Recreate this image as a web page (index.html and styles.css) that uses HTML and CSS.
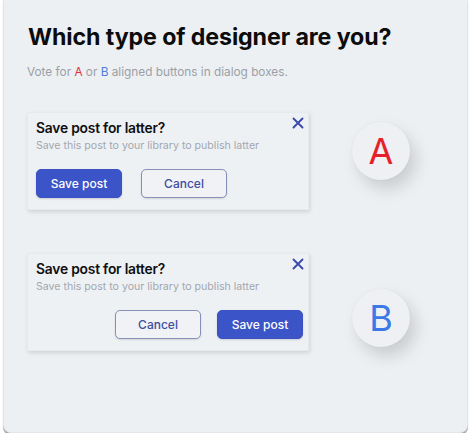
FILE: index.html
```html
<!DOCTYPE html>
<html lang="en">
<head>
<meta charset="utf-8">
<title>Which type of designer are you?</title>
<link rel="stylesheet" href="styles.css">
</head>
<body>
<div class="card">
  <h1 class="title">Which type of designer are you?</h1>
  <p class="lead">Vote for <span class="a">A</span> or <span class="b">B</span> aligned buttons in dialog boxes.</p>

  <div class="row">
    <div class="dialog">
      <div class="dialog-head">
        <h2 class="dialog-title">Save post for latter?</h2>
        <svg class="close" viewBox="0 0 12 12" width="12" height="12"><path d="M1.5 1.5 L10.5 10.5 M10.5 1.5 L1.5 10.5" stroke="#3a49ad" stroke-width="1.9" stroke-linecap="round" fill="none"/></svg>
      </div>
      <p class="dialog-text">Save this post to your library to publish latter</p>
      <div class="actions">
        <button class="btn btn-primary">Save post</button>
        <button class="btn btn-outline">Cancel</button>
      </div>
    </div>
    <div class="badge badge-a">A</div>
  </div>

  <div class="row row-b">
    <div class="dialog">
      <div class="dialog-head">
        <h2 class="dialog-title">Save post for latter?</h2>
        <svg class="close" viewBox="0 0 12 12" width="12" height="12"><path d="M1.5 1.5 L10.5 10.5 M10.5 1.5 L1.5 10.5" stroke="#3a49ad" stroke-width="1.9" stroke-linecap="round" fill="none"/></svg>
      </div>
      <p class="dialog-text">Save this post to your library to publish latter</p>
      <div class="actions actions-end">
        <button class="btn btn-outline">Cancel</button>
        <button class="btn btn-primary">Save post</button>
      </div>
    </div>
    <div class="badge badge-b">B</div>
  </div>
</div>
</body>
</html>
```
FILE: styles.css
```css
* { box-sizing: border-box; }
html, body { margin: 0; padding: 0; background: #ffffff; }
body { font-family: Inter, "Noto Sans", sans-serif; }

.card {
  margin: 0 6px 0 3px;
  width: 465px;
  height: 433px;
  background: #edf0f3;
  border: 1px solid #e2e5e9;
  border-top: none;
  border-radius: 0 0 8px 8px;
  box-shadow: 0 2px 1px rgba(0,0,0,0.38);
  padding: 22px 0 0 23px;
}

.title {
  margin: 0 0 0 1px;
  font-size: 23.2px;
  line-height: 30px;
  font-weight: 700;
  color: #0c0c0d;
  letter-spacing: -0.1px;
}

.lead {
  margin: 12px 0 0 0;
  font-size: 11.8px;
  line-height: 16px;
  color: #9a9fa7;
}
.lead .a { color: #e0303a; }
.lead .b { color: #4a7de2; }

.row {
  display: flex;
  align-items: flex-start;
  margin-top: 32px;
}
.row-b { margin-top: 43px; }

.dialog {
  width: 282px;
  height: 98px;
  background: #eef1f4;
  border: 1px solid #e6e9ed;
  box-shadow: 1px 2px 4px rgba(0,0,0,0.12);
  padding: 6px 4px 0 8px;
}

.dialog-head {
  display: flex;
  justify-content: space-between;
  align-items: flex-start;
}

.dialog-title {
  margin: 0;
  font-size: 13.8px;
  line-height: 18px;
  font-weight: 600;
  color: #0f0f10;
  letter-spacing: -0.2px;
}

.close { margin-top: -2px; margin-right: 0; }

.dialog-text {
  margin: 2px 0 0 0;
  font-size: 10.6px;
  line-height: 14px;
  color: #a2a7af;
}

.actions {
  display: flex;
  gap: 19px;
  margin-top: 16px;
}
.actions-end { justify-content: flex-end; gap: 16px; margin-right: 1px; }

.btn {
  width: 86px;
  height: 29px;
  border-radius: 5px;
  font-family: Inter, "Noto Sans", sans-serif;
  font-size: 12px;
  font-weight: 500;
  padding: 0;
  cursor: pointer;
}
.btn-primary {
  background: #3b54c8;
  color: #ffffff;
  border: 1px solid #3a52c4;
  box-shadow: 0 1px 2px rgba(0,0,0,0.15);
}
.btn-outline {
  background: #f0f2f6;
  color: #3e4e9e;
  border: 1px solid #8890b9;
  box-shadow: 0 1px 2px rgba(0,0,0,0.12);
}

.badge {
  width: 58px;
  height: 58px;
  border-radius: 50%;
  background: #eef0f3;
  box-shadow: 6px 9px 16px rgba(0,0,0,0.15), 0 0 2px rgba(0,0,0,0.05);
  display: flex;
  align-items: center;
  justify-content: center;
  font-size: 36px;
  font-weight: 400;
  margin-left: 43px;
}
.badge-a { color: #e6202b; margin-top: 10px; }
.badge-b { color: #3b7ae6; margin-top: 36px; }
```
